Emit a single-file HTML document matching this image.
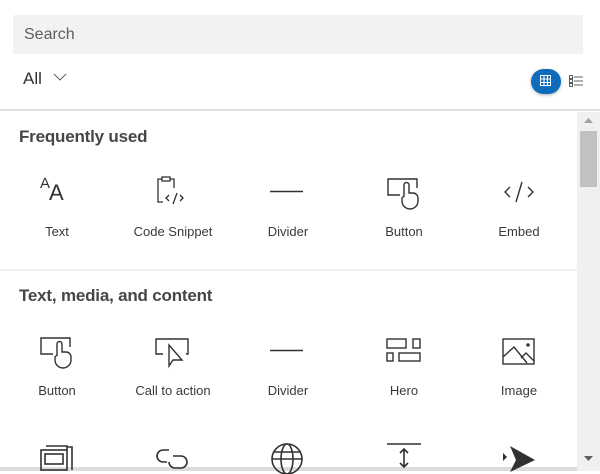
<!DOCTYPE html><html><head><style>
body{margin:0;width:600px;height:471px;overflow:hidden;background:#fff;font-family:"Liberation Sans",sans-serif;position:relative;color:#323130}
.a{position:absolute}
.lbl{position:absolute;font-size:13px;color:#3b3a39;text-align:center;width:116px;transform:translateX(-58px)}
.h{position:absolute;left:19px;font-size:17px;font-weight:bold;color:#484644;letter-spacing:-0.2px}
svg{position:absolute;overflow:visible}
</style></head><body>
<div class="a" style="left:13px;top:15px;width:570px;height:39px;background:#f3f2f1;border-radius:2px"></div>
<div class="a" style="left:24px;top:26px;font-size:16px;color:#605e5c">Search</div>
<div class="a" style="left:23px;top:69px;font-size:17px;color:#323130">All</div>
<svg style="left:53px;top:73px" width="14" height="9"><path d="M1 1l6 6 6-6" fill="none" stroke="#605e5c" stroke-width="1"/></svg>
<div class="a" style="left:531px;top:69px;width:30px;height:25px;background:#0f6cbd;border-radius:13px;box-shadow:0 1px 3px rgba(0,0,0,.3)"></div>
<svg style="left:540px;top:75px" width="12" height="12"><g fill="none" stroke="#fff" stroke-width="1"><rect x="0.5" y="0.5" width="10" height="10"/><path d="M4 0v11M7.5 0v11M0 4h11M0 7.5h11"/></g></svg>
<svg style="left:569px;top:75px" width="14" height="12"><g fill="none" stroke="#605e5c" stroke-width="1"><rect x="0.5" y="0.5" width="3" height="3"/><rect x="0.5" y="4.5" width="3" height="3"/><rect x="0.5" y="8.5" width="3" height="3"/><path d="M5 2h9M5 6h9M5 10h9"/></g></svg>
<div class="a" style="left:0;top:109px;width:600px;height:2px;background:#e1dfdd"></div>
<div class="a" style="left:577px;top:112px;width:23px;height:359px;background:#f0f0f0"></div>
<div class="a" style="left:580px;top:131px;width:17px;height:56px;background:#c1c1c1"></div>
<svg style="left:584px;top:118px" width="9" height="6"><path d="M0 5h9L4.5 0z" fill="#a3a3a3"/></svg>
<svg style="left:584px;top:456px" width="9" height="6"><path d="M0 0h9L4.5 5z" fill="#606060"/></svg>
<div class="a" style="left:0;top:467px;width:577px;height:4px;background:#dcdcdc"></div>

<div class="h" style="top:127px">Frequently used</div>
<div class="a" style="left:0;top:269px;width:577px;height:2px;background:#f0f0f0"></div>
<div class="h" style="top:286px">Text, media, and content</div>

<div class="a" style="left:40px;top:175px;font-size:15px;color:#323130">A</div><div class="a" style="left:49px;top:180px;font-size:22px;color:#323130">A</div>
<svg style="left:156px;top:176px" width="34" height="30"><g fill="none" stroke="#323130" stroke-width="1.3"><path d="M6 3H2v23h5M14 3h4v9"/><rect x="6" y="1" width="8" height="4"/><path d="M13 19l-3 3 3 3M21 17l-4 11M24 19l3 3-3 3"/></g></svg>
<svg style="left:270px;top:190px" width="34" height="3"><path d="M0 1.5h33" stroke="#323130" stroke-width="1.4"/></svg>
<svg style="left:386px;top:177px" width="36" height="32"><g fill="none" stroke="#323130" stroke-width="1.4"><path d="M14 18H2V2h29v9"/><path d="M18 20V8a2.5 2.5 0 015 0v8h4a5 5 0 015 5v3a8 8 0 01-16 0v-3l2-2"/></g></svg>
<svg style="left:503px;top:181px" width="32" height="22"><g fill="none" stroke="#323130" stroke-width="1.4"><path d="M7 6l-5 5 5 5M25 6l5 5-5 5M19 1l-6 20"/></g></svg>
<div class="lbl" style="left:57px;top:224px">Text</div>
<div class="lbl" style="left:173px;top:224px">Code Snippet</div>
<div class="lbl" style="left:288px;top:224px">Divider</div>
<div class="lbl" style="left:404px;top:224px">Button</div>
<div class="lbl" style="left:519px;top:224px">Embed</div>

<svg style="left:39px;top:336px" width="36" height="32"><g fill="none" stroke="#323130" stroke-width="1.4"><path d="M14 18H2V2h29v9"/><path d="M18 20V8a2.5 2.5 0 015 0v8h4a5 5 0 015 5v3a8 8 0 01-16 0v-3l2-2"/></g></svg>
<svg style="left:155px;top:338px" width="36" height="30"><g fill="none" stroke="#323130" stroke-width="1.4"><path d="M8 16H1V1h32v15h-2"/><path d="M14 7v21l4-6 9 0z"/></g></svg>
<svg style="left:270px;top:349px" width="34" height="3"><path d="M0 1.5h33" stroke="#323130" stroke-width="1.4"/></svg>
<svg style="left:386px;top:338px" width="36" height="26"><g fill="none" stroke="#323130" stroke-width="1.4"><rect x="1" y="1" width="19" height="9"/><rect x="27" y="1" width="7" height="9"/><rect x="1" y="15" width="6" height="8"/><rect x="13" y="15" width="21" height="8"/></g></svg>
<svg style="left:502px;top:338px" width="34" height="28"><g fill="none" stroke="#323130" stroke-width="1.4"><rect x="1" y="1" width="31" height="25"/><path d="M1 19l11-10 13 16M19 20l5-5 8 8"/><circle cx="26" cy="7" r="1" fill="#323130"/></g></svg>
<div class="lbl" style="left:57px;top:383px">Button</div>
<div class="lbl" style="left:173px;top:383px">Call to action</div>
<div class="lbl" style="left:288px;top:383px">Divider</div>
<div class="lbl" style="left:404px;top:383px">Hero</div>
<div class="lbl" style="left:519px;top:383px">Image</div>

<svg style="left:40px;top:444px" width="34" height="30"><g fill="none" stroke="#323130" stroke-width="1.6"><rect x="1" y="6" width="26" height="20"/><rect x="5" y="10" width="18" height="10"/><path d="M6 2h21v4M27 3h5v23"/></g></svg>
<svg style="left:155px;top:446px" width="36" height="28"><g fill="none" stroke="#323130" stroke-width="1.6"><path d="M14 4H8a6 6 0 000 12h4M18 10h8a6 6 0 010 12h-6a6 6 0 01-6-6"/></g></svg>
<svg style="left:271px;top:443px" width="34" height="30"><g fill="none" stroke="#323130" stroke-width="1.6"><circle cx="16" cy="16" r="15"/><ellipse cx="16" cy="16" rx="6" ry="15"/><path d="M1 16h30M3 9h26"/></g></svg>
<svg style="left:386px;top:443px" width="36" height="28"><g fill="none" stroke="#323130" stroke-width="1.6"><path d="M1 1h34M18 6v18M14 10l4-4 4 4M14 20l4 4 4-4"/></g></svg>
<svg style="left:503px;top:446px" width="34" height="26"><path d="M0 7l4 4-4 4zM7 0l25 14-25 12 6-12z" fill="#323130"/></svg>
</body></html>
